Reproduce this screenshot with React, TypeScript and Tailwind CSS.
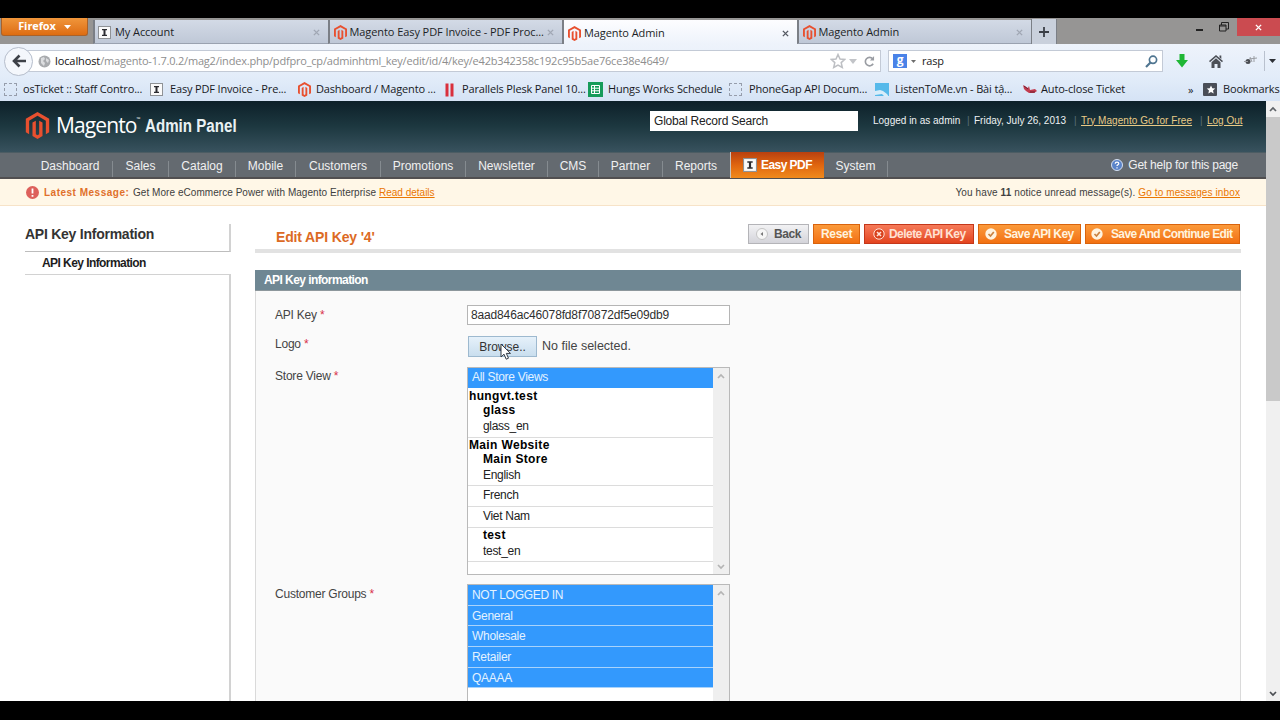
import type { ReactNode } from 'react';

const tabs = [
  { title: 'My Account', icon: 'invoice', active: false },
  { title: 'Magento Easy PDF Invoice - PDF Proc...', icon: 'magento', active: false },
  { title: 'Magento Admin', icon: 'magento', active: true },
  { title: 'Magento Admin', icon: 'magento', active: false },
];

const bookmarks = [
  { title: 'osTicket :: Staff Contro...', icon: 'blank', cell: 'w-[146px]', iconCell: 'w-[19px]' },
  { title: 'Easy PDF Invoice - Pre...', icon: 'invoice', cell: 'w-[147px]', iconCell: 'w-[20px]' },
  { title: 'Dashboard / Magento ...', icon: 'magento', cell: 'w-[146px]', iconCell: 'w-[19px]' },
  { title: 'Parallels Plesk Panel 10...', icon: 'parallels', cell: 'w-[145px]', iconCell: 'w-[19px]' },
  { title: 'Hungs Works Schedule', icon: 'sheet', cell: 'w-[141px]', iconCell: 'w-[20px]' },
  { title: 'PhoneGap API Docum...', icon: 'blank', cell: 'w-[146px]', iconCell: 'w-[20px]' },
  { title: 'ListenToMe.vn - Bài tậ...', icon: 'listen', cell: 'w-[147px]', iconCell: 'w-[20px]' },
  { title: 'Auto-close Ticket', icon: 'ticket', cell: 'w-[166px]', iconCell: 'w-[19px]' },
];

const menu = [
  { label: 'Dashboard', cell: 'w-[85px]' },
  { label: 'Sales', cell: 'w-[56px]' },
  { label: 'Catalog', cell: 'w-[67px]' },
  { label: 'Mobile', cell: 'w-[60px]' },
  { label: 'Customers', cell: 'w-[85px]' },
  { label: 'Promotions', cell: 'w-[85px]' },
  { label: 'Newsletter', cell: 'w-[82px]' },
  { label: 'CMS', cell: 'w-[51px]' },
  { label: 'Partner', cell: 'w-[64px]' },
  { label: 'Reports', cell: 'w-[67px]' },
];

const groups = ['NOT LOGGED IN', 'General', 'Wholesale', 'Retailer', 'QAAAA'];

const MagentoMark = ({ className = 'w-[15px] h-[15px]' }: { className?: string }) => (
  <svg viewBox="0 0 24 24" className={className} fill="#e8502f">
    <path d="M12 24l-4.455-2.572v-12l2.97-1.715v12.001l1.485.902 1.485-.902V7.713l2.971 1.715v12L12 24zM22.391 6v12l-2.969 1.714V7.713L12 3.43 4.574 7.713v12.001L1.609 18V6L12 0l10.391 6z" />
  </svg>
);

const InvoiceIcon = ({ className = 'w-[13px] h-[13px]' }: { className?: string }) => (
  <svg viewBox="0 0 13 13" className={className}>
    <rect x="0.5" y="0.5" width="12" height="12" fill="#fafafa" stroke="#8f9296" />
    <path d="M4 3h5v1.3H7.5v4.4H9V10H4V8.700h1.500V4.300H4z" fill="#2b2b30" />
  </svg>
);

const SiteIcon = ({ name }: { name: string }) => {
  switch (name) {
    case 'magento':
      return <MagentoMark />;
    case 'invoice':
      return <InvoiceIcon />;
    case 'parallels':
      return (
        <svg viewBox="0 0 13 14" className="w-[13px] h-[14px]" fill="#d9303c">
          <rect x="2.500" y="0.500" width="3" height="13" />
          <rect x="7.500" y="0.500" width="3" height="13" />
        </svg>
      );
    case 'sheet':
      return (
        <svg viewBox="0 0 15 15" className="w-[15px] h-[15px]">
          <rect width="15" height="15" fill="#169b5a" />
          <path d="M3.500 3.500h8v8h-8zM3.500 6.200h8M3.500 8.800h8M6.500 3.500v8" fill="none" stroke="#fff" />
        </svg>
      );
    case 'listen':
      return (
        <svg viewBox="0 0 14 14" className="w-[14px] h-[14px]">
          <rect width="14" height="13" fill="#56b9ea" />
          <path d="M0 8l5-1 3 1 4 3 2 3h-4l-3-3-7 1z" fill="#d8edf9" />
        </svg>
      );
    case 'ticket':
      return (
        <svg viewBox="0 0 15 13" className="w-[15px] h-[13px]">
          <path d="M1 2l5 3 1-2 1 4 5-1 2 2-3 2H7L4 8 2 6z" fill="#c23b4e" />
          <path d="M2 3l4 3M8 9l5 0" stroke="#6e2030" />
        </svg>
      );
    default:
      return <span className="block w-[13px] h-[13px] border border-dashed border-[#969dab]" />;
  }
};

const CloseIcon = ({ color }: { color: string }) => (
  <svg viewBox="0 0 8 8" className="w-[7px] h-[7px]" stroke={color} strokeWidth="1.600">
    <path d="M1 1l6 6M7 1l-6 6" />
  </svg>
);

const Chevron = ({ down = false, color = '#b4b4b4' }: { down?: boolean; color?: string }) => (
  <svg viewBox="0 0 8 6" className="w-[8px] h-[6px]" fill="none" stroke={color} strokeWidth="1.700">
    <path d={down ? 'M1 1l3 3 3-3' : 'M1 5l3-3 3 3'} />
  </svg>
);

const TabStrip = () => (
  <div className="flex h-[26px] bg-[#969594]">
    <div className="w-[93px] pl-[1px]">
      <div className="flex items-center justify-center gap-[8px] w-[87px] h-[18px] rounded-b-[3px] border border-t-0 border-[#a9622a] bg-gradient-to-b from-[#f0963a] to-[#dd6c10] text-white text-[11px] font-bold tracking-[-0.1px]">
        Firefox
        <svg viewBox="0 0 7 4" className="w-[7px] h-[4px]" fill="#fff"><path d="M0 0h7L3.500 4z" /></svg>
      </div>
    </div>
    {tabs.map((tab, i) => (
      <div
        key={i}
        className={`flex items-center w-[234.500px] mt-[2px] border-l-[2px] border-[#7b7f86] pl-[3px] pr-[8px] pt-[2px] text-[11px] tracking-[-0.080px] text-[#1c1f26] ${
          tab.active ? 'bg-gradient-to-b from-[#fdfdff] to-[#eef3fb]' : 'bg-gradient-to-b from-[#d3dae6] to-[#bfc8d7] border-b border-b-[#9aa2b0]'
        }`}
      >
        <span className="w-[17px] shrink-0"><SiteIcon name={tab.icon} /></span>
        <span className="flex-1 whitespace-nowrap">{tab.title}</span>
        <CloseIcon color={tab.active ? '#555a63' : '#a0a7b4'} />
      </div>
    ))}
    <div className="flex items-center justify-center w-[26px] mt-[1px] border-x border-[#7b7f86] bg-[#c9d0dc]">
      <svg viewBox="0 0 10 10" className="w-[10px] h-[10px]" stroke="#3b3f47" strokeWidth="1.800"><path d="M5 0v10M0 5h10" /></svg>
    </div>
    <div className="flex-1" />
    <div className="flex w-[86px]">
      <div className="flex flex-1 items-start gap-[16px] pt-[4px] pl-[2px]">
        <span className="w-[7px] h-[2px] mt-[7px] bg-[#222]" />
        <svg viewBox="0 0 10 10" className="w-[10px] h-[10px]" fill="none" stroke="#222">
          <path d="M0.500 3h6.500v6H0.500zM0.500 4h6.500M2.500 3V0.500h7V7H7" />
        </svg>
      </div>
      <div className="flex items-center justify-center w-[43px] h-[18px] bg-[#cb4b50]">
        <CloseIcon color="#fff" />
      </div>
    </div>
  </div>
);

const NavBar = () => (
  <div className="flex items-center h-[34px] bg-gradient-to-b from-[#eef3fb] to-[#e2ecf9] pl-[4px]">
    <div className="relative z-10 flex items-center justify-center w-[29px] h-[29px] rounded-full border border-[#b5bdcb] bg-[#f4f7fc]">
      <svg viewBox="0 0 14 14" className="w-[14px] h-[14px]" fill="none" stroke="#3d4148" strokeWidth="2.600">
        <path d="M14 7H2.500M7.500 1.500L2 7l5.500 5.500" />
      </svg>
    </div>
    <div className="flex items-center w-[854px] h-[22px] -ml-[6px] pl-[10px] pr-[5px] border border-[#c3cad6] bg-white text-[11px]">
      <svg viewBox="0 0 13 13" className="w-[13px] h-[13px] mr-[4px] shrink-0">
        <circle cx="6.500" cy="6.500" r="6" fill="#a9abae" />
        <path d="M3 3l3-1 1 2-2 2 2 2-1 3-3-3zM8 3l3 2-1 3-2-2z" fill="#dcdddf" />
      </svg>
      <span className="flex-1 whitespace-nowrap text-[#8e8e8e] tracking-[-0.200px]">
        <span className="text-[#101010] tracking-[-0.100px]">localhost</span>/magento-1.7.0.2/mag2/index.php/pdfpro_cp/adminhtml_key/edit/id/4/key/e42b342358c192c95b5ae76ce38e4649/
      </span>
      <svg viewBox="0 0 16 16" className="w-[16px] h-[16px]" fill="none" stroke="#bdbfc3" strokeWidth="1.500">
        <path d="M8 1.500l2 4.500 4.800.4-3.600 3.200 1.100 4.900L8 12l-4.300 2.500 1.100-4.900L1.200 6.400 6 6z" />
      </svg>
      <svg viewBox="0 0 8 5" className="w-[8px] h-[5px] ml-[3px] mr-[7px]" fill="#c2c4c8"><path d="M0 0h8L4 5z" /></svg>
      <svg viewBox="0 0 12 12" className="w-[11px] h-[11px]" fill="none" stroke="#9a9da3" strokeWidth="1.800">
        <path d="M10 8.500A4.600 4.600 0 1 1 9.500 3" />
        <path d="M11 0v4.800H6.500z" fill="#9a9da3" stroke="none" />
      </svg>
    </div>
    <div className="flex items-center w-[275px] h-[22px] ml-[7px] pl-[4px] pr-[4px] border border-[#c3cad6] bg-white text-[11px] tracking-[-0.200px] text-[#1a1a1a]">
      <span className="flex items-center justify-center w-[14px] h-[14px] pb-[3px] bg-[#4a83e8] text-white text-[12px] leading-none font-bold">g</span>
      <svg viewBox="0 0 5 3" className="w-[5px] h-[3px] ml-[4px] mr-[6px]" fill="#6d6d6d"><path d="M0 0h5L2.500 3z" /></svg>
      <span className="flex-1">rasp</span>
      <svg viewBox="0 0 13 13" className="w-[13px] h-[13px]" fill="none" stroke="#4f7590" strokeWidth="1.700">
        <circle cx="8" cy="4.800" r="3.600" />
        <path d="M5.500 7.500L1 12" strokeWidth="2.200" />
      </svg>
    </div>
    <svg viewBox="0 0 12 14" className="w-[12px] h-[14px] ml-[13px]" fill="#1fb735">
      <path d="M3.500 0h5v6H12l-6 7.500L0 6h3.500z" />
    </svg>
    <svg viewBox="0 0 14 13" className="w-[14px] h-[13px] ml-[21px]" fill="#4b4f56">
      <path d="M7 0l7 6-1 1.200L7 2 1 7.200 0 6zM2.500 7.200L7 3.300l4.500 3.900V13H8.500V9h-3v4h-3z" />
      <path d="M10.500 0.500h1.800V4l-1.800-1.500z" />
    </svg>
    <svg viewBox="0 0 14 12" className="w-[14px] h-[12px] ml-[21px]">
      <circle cx="4" cy="6.500" r="2.500" fill="#4a4d52" />
      <path d="M0 6.500h4M5 4l8-1M6 2l2 5M10 1v6" stroke="#9a9da2" />
    </svg>
    <span className="w-px h-[20px] ml-[6px] mr-[4px] bg-[#b9c1ce]" />
    <svg viewBox="0 0 7 4" className="w-[7px] h-[4px]" fill="#2d3036"><path d="M0 0h7L3.500 4z" /></svg>
  </div>
);

const BookmarksBar = () => (
  <div className="flex items-center h-[23px] pl-[4px] bg-gradient-to-b from-[#e2ecf9] to-[#d5e3f5] text-[11px] tracking-[-0.160px] text-[#17191e] whitespace-nowrap">
    {bookmarks.map((b) => (
      <div key={b.title} className={`flex items-center shrink-0 ${b.cell}`}>
        <span className={`shrink-0 ${b.iconCell}`}><SiteIcon name={b.icon} /></span>
        {b.title}
      </div>
    ))}
    <span className="w-[15px] shrink-0 leading-none">»</span>
    <svg viewBox="0 0 14 13" className="w-[14px] h-[13px] mr-[6px] shrink-0">
      <rect width="14" height="13" rx="1" fill="#4a4e57" />
      <path d="M8 2.500l1.300 2.700 2.900.3-2.200 2 .7 3L8 9l-2.700 1.500.7-3-2.200-2 2.900-.3z" fill="#fff" />
    </svg>
    Bookmarks
  </div>
);

const AdminHeader = () => (
  <header className="flex items-start h-[51px] bg-gradient-to-b from-[#0d2029] via-[#1d3840] to-[#38525e]">
    <div className="flex items-center pl-[24px] pt-[9px] h-[39px] w-[650px] text-white">
      <MagentoMark className="w-[27px] h-[29px]" />
      <span className="flex w-[94px] pl-[5px] text-[21px] leading-none tracking-[-0.900px] font-['Open_Sans',sans-serif]">
        Magento<span className="pt-[2px] text-[5px] leading-none tracking-normal">™</span>
      </span>
      <span className="mt-[2px] w-[110px] origin-left scale-x-[0.840] text-[18px] leading-none font-bold text-[#e9f1f3] whitespace-nowrap">Admin Panel</span>
    </div>
    <div className="flex items-center mt-[9px] h-[20px] text-[10px] text-[#eef2f3] whitespace-nowrap">
      <div className="flex items-center w-[208px] h-[20px] mt-px pl-[4px] bg-white text-[12px] tracking-[-0.200px] text-[#222]">Global Record Search</div>
      <span className="w-[94px] ml-[15px]">Logged in as admin</span>
      <span className="w-[107px] flex"><span className="w-[7px] text-[#5c6f76]">|</span>Friday, July 26, 2013</span>
      <span className="w-[126px] flex tracking-[0.060px]"><span className="w-[7px] text-[#5c6f76]">|</span><a className="underline text-[#e9ca86]">Try Magento Go for Free</a></span>
      <span className="flex"><span className="w-[7px] text-[#5c6f76]">|</span><a className="underline text-[#e9ca86]">Log Out</a></span>
    </div>
  </header>
);

const AdminMenu = () => (
  <nav className="flex items-center h-[27px] pl-[28px] pr-[28px] border-t border-[#4c5c63] border-b-2 border-b-[#514f50] bg-[#646a70] text-[12px] text-[#f0f0f0] whitespace-nowrap">
    {menu.map((m) => (
      <div key={m.label} className={`flex items-center justify-center h-full ${m.cell}`}>
        <span className="flex-1 pt-px text-center">{m.label}</span>
        <span className={`w-px h-[16px] mt-[8px] ${m.label === 'Reports' ? '' : 'bg-[#858b90]'}`} />
      </div>
    ))}
    <div className="flex items-center gap-[4px] h-[26px] w-[94px] pl-[12px] border-l border-[#c9c4bf] bg-gradient-to-b from-[#b8400f] via-[#e0650f] to-[#f08a1c] font-bold text-white tracking-[-0.550px]">
      <InvoiceIcon className="w-[14px] h-[14px]" />
      Easy PDF
    </div>
    <div className="flex items-center w-[64px] h-full">
      <span className="flex-1 pt-px text-center">System</span>
      <span className="w-px h-[16px] mt-[8px] bg-[#858b90]" />
    </div>
    <div className="flex flex-1 items-center justify-end gap-[5px] tracking-[-0.230px]">
      <svg viewBox="0 0 12 12" className="w-[12px] h-[12px]">
        <circle cx="6" cy="6" r="5.500" fill="#5b84c9" stroke="#d5e0f2" />
        <path d="M4.200 4.800c0-2.400 3.600-2.200 3.600-.2 0 1.200-1.800 1.200-1.800 2.400M6 8.200v1.200" fill="none" stroke="#fff" strokeWidth="1.200" />
      </svg>
      Get help for this page
    </div>
  </nav>
);

const MessageBar = () => (
  <div className="flex items-center h-[27px] pl-[26px] pr-[26px] border-b border-[#f7e3c8] bg-[#fff7e7] text-[10px] text-[#404040] whitespace-nowrap">
    <svg viewBox="0 0 13 13" className="w-[13px] h-[13px] mr-[5px]">
      <circle cx="6.500" cy="6.500" r="6.500" fill="#dd605b" />
      <path d="M6.500 2.500v5M6.500 9v1.700" stroke="#fff" strokeWidth="1.800" />
    </svg>
    <span className="w-[89px] font-bold tracking-[0.500px] text-[#e0702a]">Latest Message:</span>
    <span className="w-[246px] tracking-[0.050px]">Get More eCommerce Power with Magento Enterprise</span>
    <a className="underline text-[#ea7601]">Read details</a>
    <span className="flex-1" />
    <span className="tracking-[0.110px]">You have <b>11</b> notice unread message(s). <a className="underline text-[#ea7601]">Go to messages inbox</a></span>
  </div>
);

const ActionButton = ({ className, icon, children }: { className: string; icon?: 'back' | 'delete' | 'save'; children: ReactNode }) => (
  <button className={`flex items-center h-[20px] border pb-px text-[12px] font-bold whitespace-nowrap ${className}`}>
    {icon && (
      <svg viewBox="0 0 12 12" className="w-[12px] h-[12px] shrink-0">
        {icon === 'back' && (
          <>
            <circle cx="6" cy="6" r="5.500" fill="#f6f6f6" stroke="#c4c4c4" />
            <path d="M7 4v4L4.500 6z" fill="#777" />
          </>
        )}
        {icon === 'delete' && (
          <>
            <circle cx="6" cy="6" r="5.200" fill="#d8401c" stroke="#ffe3d8" />
            <path d="M4 4l4 4M8 4l-4 4" stroke="#ffe3d8" strokeWidth="1.600" />
          </>
        )}
        {icon === 'save' && (
          <>
            <circle cx="6" cy="6" r="5.700" fill="#fff3e0" />
            <path d="M3.500 6l2 2 3.300-4" fill="none" stroke="#c98242" strokeWidth="1.700" />
          </>
        )}
      </svg>
    )}
    {children}
  </button>
);

const orange = 'border-[#d9630d] bg-gradient-to-b from-[#fb9a3a] to-[#f2700f] text-[#fff3df]';

const Sidebar = () => (
  <aside className="w-[231px] pt-[18px] pl-[25px] font-bold whitespace-nowrap">
    <div className="flex h-[28px] border-b border-r-2 border-[#bdbdbd] border-r-[#d2d2d2] pt-px text-[14px] tracking-[-0.250px] leading-[19px] text-[#333]">API Key Information</div>
    <div className="flex items-center h-[23px] pl-[17px] border-b border-[#d2d2d2] text-[12px] tracking-[-0.570px] text-[#1d1d1d]">API Key Information</div>
    <div className="h-[430px] border-r-2 border-[#d2d2d2]" />
  </aside>
);

const Label = ({ children, className }: { children: ReactNode; className: string }) => (
  <div className={`w-[192px] text-[12px] tracking-[-0.220px] leading-[16px] text-[#444] ${className}`}>
    {children} <span className="text-[#d8304a]">*</span>
  </div>
);

const ListBox = ({ children, className, down = false }: { children: ReactNode; className: string; down?: boolean }) => (
  <div className={`flex w-[263px] border border-[#b9b9b9] bg-white text-[12px] tracking-[-0.300px] text-[#222] ${className}`}>
    <div className="w-[245px]">{children}</div>
    <div className="flex flex-col flex-1 items-center justify-between bg-[#efefef] pt-[5px] pb-[4px]">
      <Chevron />
      {down && <Chevron down />}
    </div>
  </div>
);

const Option = ({ children }: { children: ReactNode }) => (
  <div className="pl-[15px] border-b border-[#dcdcdc] h-[20.700px] leading-[19px]">{children}</div>
);

const Group = ({ children, nested = false }: { children: ReactNode; nested?: boolean }) => (
  <div className={`font-bold text-[12px] leading-[14px] tracking-[0.350px] text-black ${nested ? 'pl-[15px]' : 'pl-px'}`}>{children}</div>
);

const ApiKeyForm = () => (
  <div className="h-[412px] overflow-hidden border-x border-[#dadada] bg-[#fafafa] pl-[19px]">
    <div className="flex h-[36px] pt-[14px]">
      <Label className="pt-[2px]">API Key</Label>
      <div className="flex items-center w-[263px] h-[20px] pl-[3px] border border-[#b5b5b5] bg-white text-[12px] tracking-[-0.150px] text-[#2f2f2f]">8aad846ac46078fd8f70872df5e09db9</div>
    </div>
    <div className="flex h-[31px] pt-[9px]">
      <Label className="">Logo</Label>
      <div className="relative flex items-center justify-center w-[69px] h-[21px] ml-px border border-[#9db9cf] bg-gradient-to-b from-[#e6f1fa] to-[#c9deee] text-[12px] text-[#333]">
        Browse..
        <svg viewBox="0 0 12 18" className="absolute left-[31px] top-[6px] w-[12px] h-[18px]">
          <path d="M1 1v13l3-2.800 2.200 5 2.300-1-2.200-4.800h4.200z" fill="#fff" stroke="#333a44" />
        </svg>
      </div>
      <span className="pl-[5px] text-[12.500px] leading-[21px] text-[#444]">No file selected.</span>
    </div>
    <div className="flex pt-[9px]">
      <Label className="pt-px">Store View</Label>
      <ListBox className="h-[208px]" down>
        <div className="h-[20px] mb-px pl-[4px] bg-[#3399fd] leading-[19px] text-[#e3f2ff]">All Store Views</div>
        <Group>hungvt.test</Group>
        <Group nested>glass</Group>
        <Option>glass_en</Option>
        <Group>Main Website</Group>
        <Group nested>Main Store</Group>
        <Option>English</Option>
        <Option>French</Option>
        <Option>Viet Nam</Option>
        <Group nested>test</Group>
        <Option>test_en</Option>
      </ListBox>
    </div>
    <div className="flex pt-[9px]">
      <Label className="pt-[2px]">Customer Groups</Label>
      <ListBox className="h-[208px]">
        {groups.map((g) => (
          <div key={g} className="h-[20.700px] pl-[4px] border-b border-[#a9d3fb] bg-[#3399fd] leading-[20px] text-[#e3f2ff]">{g}</div>
        ))}
      </ListBox>
    </div>
  </div>
);

const App = () => (
  <div className="w-[1280px] h-[720px] overflow-hidden bg-black pt-[18px] font-['Liberation_Sans',Arial,sans-serif]">
    <div className="font-['Open_Sans','Noto_Sans',sans-serif]">
      <TabStrip />
      <NavBar />
      <BookmarksBar />
    </div>
    <div className="flex h-[600px] overflow-hidden bg-white">
      <div className="w-[1266px]">
        <AdminHeader />
        <AdminMenu />
        <MessageBar />
        <div className="flex">
          <Sidebar />
          <main className="w-[1010px] pl-[24px]">
            <div className="flex items-start h-[47px] pt-[18px] pr-px border-b-[4px] border-[#e2e2e2]">
              <h1 className="flex-1 pl-[21px] pt-[3px] text-[14px] tracking-[-0.150px] leading-[21px] font-bold text-[#dc6a24]">Edit API Key '4'</h1>
              <div className="flex">
                <ActionButton icon="back" className="w-[61px] pl-[7px] gap-[6px] tracking-[-0.400px] border-[#b4b4b8] bg-gradient-to-b from-[#f2f2f4] to-[#d4d4da] text-[#555]">Back</ActionButton>
                <ActionButton className={`w-[47px] ml-[4px] pl-[7px] tracking-[-0.300px] ${orange}`}>Reset</ActionButton>
                <ActionButton icon="delete" className="w-[110px] ml-[4px] pl-[8px] gap-[4px] tracking-[-0.550px] border-[#c4371a] bg-gradient-to-b from-[#f67a58] to-[#e3431d] text-[#ffe1d3]">Delete API Key</ActionButton>
                <ActionButton icon="save" className={`w-[103px] ml-[4px] pl-[6px] gap-[7px] tracking-[-0.550px] ${orange}`}>Save API Key</ActionButton>
                <ActionButton icon="save" className={`w-[155px] ml-[4px] pl-[5px] gap-[8px] tracking-[-0.650px] ${orange}`}>Save And Continue Edit</ActionButton>
              </div>
            </div>
            <div className="flex items-center h-[21px] mt-[17px] pl-[9px] bg-[#6f8793] border-b border-[#8d979c] text-[12px] tracking-[-0.570px] font-bold text-white">API Key information</div>
            <ApiKeyForm />
          </main>
        </div>
      </div>
      <div className="flex flex-col items-center w-[14px] bg-[#f0f0f0]">
        <div className="flex items-center justify-center h-[16px]"><Chevron color="#5f6368" /></div>
        <div className="w-full h-[284px] bg-[#c9c9c9]" />
        <div className="flex flex-1 items-end pb-[4px]"><Chevron down color="#4c4f54" /></div>
      </div>
    </div>
  </div>
);

export default App;
